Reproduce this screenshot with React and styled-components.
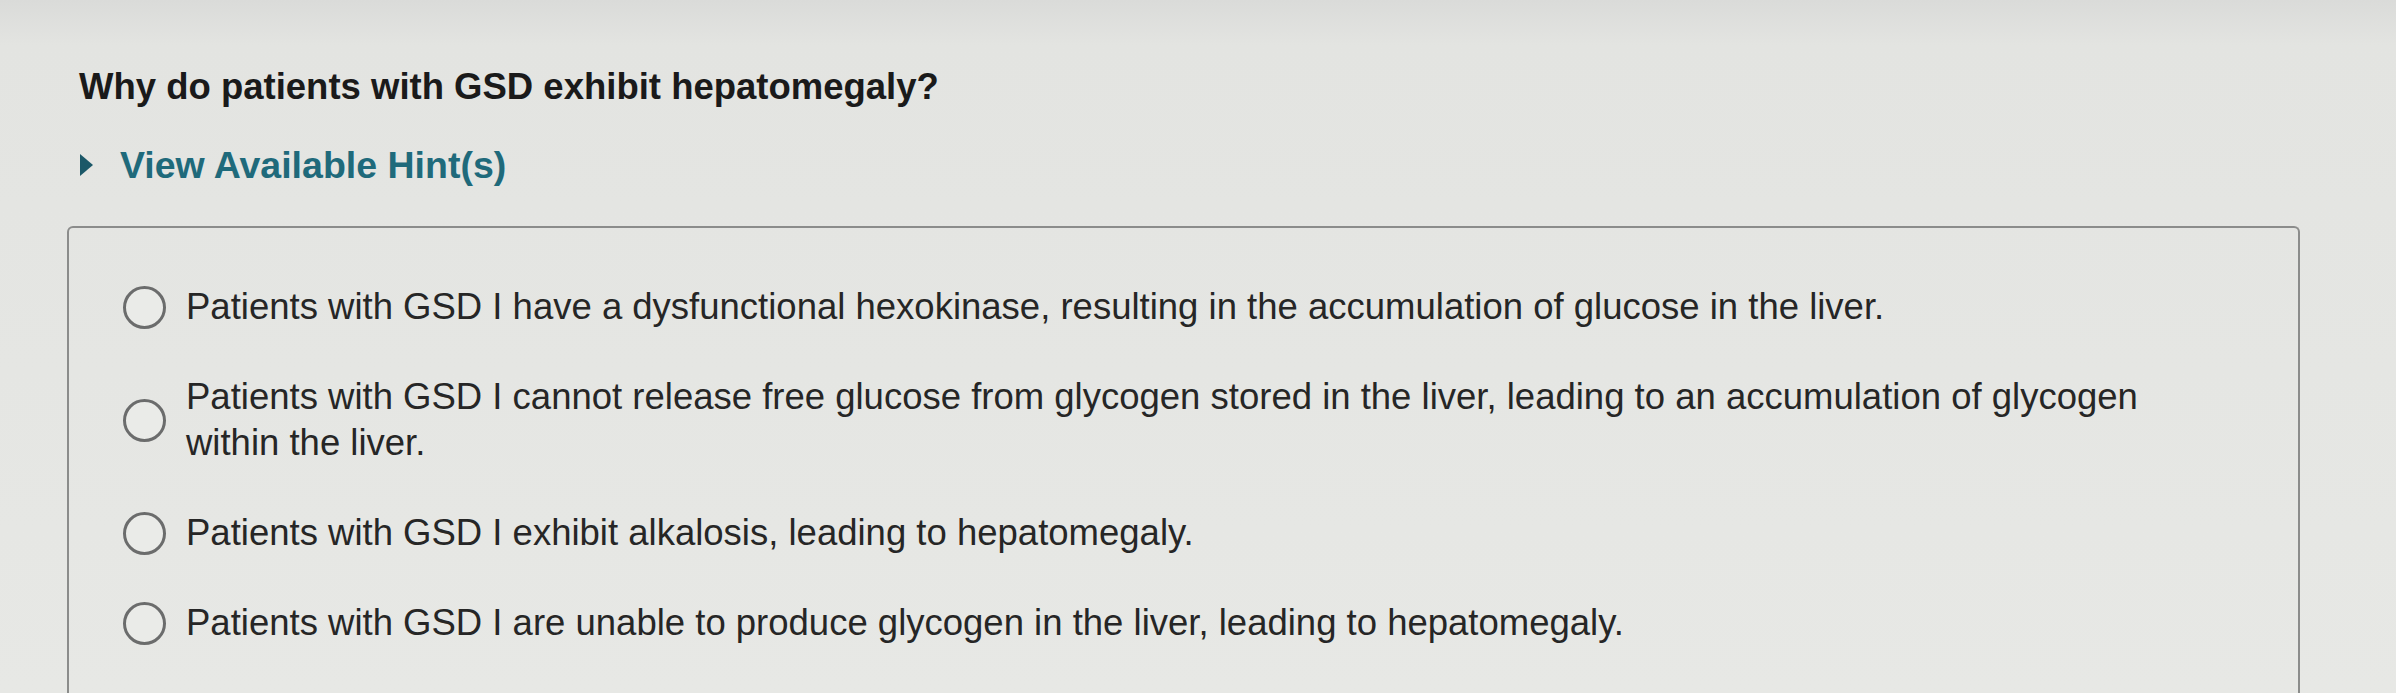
import React from 'react';
import styled, { createGlobalStyle } from 'styled-components';

const GlobalStyle = createGlobalStyle`
  html, body {
    margin: 0;
    padding: 0;
    background: #e5e6e3;
  }
  body {
    font-family: "Liberation Sans", Arial, Helvetica, sans-serif;
    color: #222;
  }
`;

const Page = styled.div`
  display: flex;
  flex-direction: column;
  padding: 65px 96px 0 67px;
  height: 693px;
  box-sizing: border-box;
  overflow: hidden;
  background: linear-gradient(180deg, #dadbd9 0px, #e3e4e1 45px, #e7e8e5 100%);
`;

const Question = styled.h2`
  margin: 0 0 0 12px;
  font-size: 36.5px;
  line-height: 44px;
  font-weight: 700;
  color: #1a1a1a;
`;

const HintToggle = styled.button`
  display: flex;
  align-items: center;
  gap: 26px;
  margin: 34px 0 0 12px;
  padding: 0;
  border: none;
  background: none;
  font-family: inherit;
  font-size: 37.5px;
  line-height: 44px;
  font-weight: 700;
  color: #1f6a7b;
  cursor: pointer;
  align-self: flex-start;

  svg {
    flex: none;
  }
`;

const AnswerBox = styled.div`
  margin-top: 39px;
  flex: 1;
  border: 2px solid #8b8c8b;
  border-bottom: none;
  border-radius: 6px 6px 0 0;
  padding: 56px 110px 0 54px;
  display: flex;
  flex-direction: column;
  gap: 44px;
`;

const Option = styled.label`
  display: flex;
  align-items: center;
  gap: 20px;
  cursor: pointer;
`;

const Radio = styled.span`
  flex: none;
  width: 37px;
  height: 37px;
  border-radius: 50%;
  border: 3px solid #6b6c6c;
  background: #eaebe8;
`;

const OptionText = styled.span`
  font-size: 36.5px;
  line-height: 46px;
  color: #262626;
`;

const options = [
  'Patients with GSD I have a dysfunctional hexokinase, resulting in the accumulation of glucose in the liver.',
  'Patients with GSD I cannot release free glucose from glycogen stored in the liver, leading to an accumulation of glycogen within the liver.',
  'Patients with GSD I exhibit alkalosis, leading to hepatomegaly.',
  'Patients with GSD I are unable to produce glycogen in the liver, leading to hepatomegaly.',
];

export default function App() {
  return (
    <>
      <GlobalStyle />
      <Page>
        <Question>Why do patients with GSD exhibit hepatomegaly?</Question>
        <HintToggle type="button">
          <svg width="15" height="24" viewBox="0 0 15 24">
            <path d="M1 1 L14 12 L1 23 Z" fill="#1b5868" />
          </svg>
          View Available Hint(s)
        </HintToggle>
        <AnswerBox>
          {options.map((text) => (
            <Option key={text}>
              <Radio />
              <OptionText>{text}</OptionText>
            </Option>
          ))}
        </AnswerBox>
      </Page>
    </>
  );
}
